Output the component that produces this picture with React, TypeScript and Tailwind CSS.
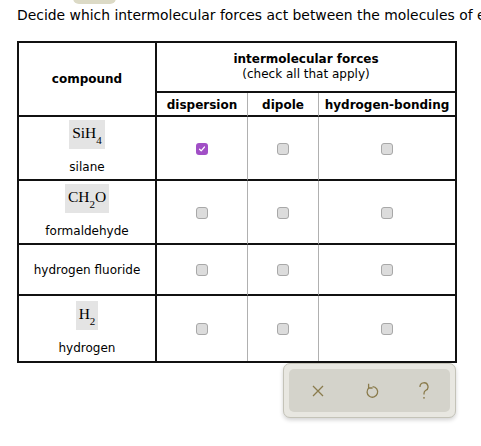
import React from 'react';

type Row = {
  formula?: React.ReactNode;
  name: string;
  checks: [boolean, boolean, boolean];
  h: string;
};

const Sub: React.FC<{ children: React.ReactNode }> = ({ children }) => (
  <sub className="text-[11px] relative top-[6px] align-baseline">{children}</sub>
);

const rows: Row[] = [
  { formula: <>SiH<Sub>4</Sub></>, name: 'silane', checks: [true, false, false], h: 'h-[64px]' },
  { formula: <>CH<Sub>2</Sub>O</>, name: 'formaldehyde', checks: [false, false, false], h: 'h-[64px]' },
  { name: 'hydrogen fluoride', checks: [false, false, false], h: 'h-[51px]' },
  { formula: <>H<Sub>2</Sub></>, name: 'hydrogen', checks: [false, false, false], h: 'h-[65px]' },
];

const Box: React.FC<{ checked: boolean }> = ({ checked }) =>
  checked ? (
    <span className="inline-flex w-[12px] h-[12px] rounded-[3px] bg-[#a14fc6] items-center justify-center">
      <svg width="8" height="8" viewBox="0 0 8 8">
        <path d="M1.5 4.2 L3.2 5.8 L6.5 2" fill="none" stroke="#fff" strokeWidth="1.2" strokeLinecap="round" strokeLinejoin="round" />
      </svg>
    </span>
  ) : (
    <span className="inline-block w-[12px] h-[12px] rounded-[3px] bg-[#dcdcdc] border border-[#a8a8a8]" />
  );

export default function App() {
  return (
    <div className="relative w-[481px] h-[446px] bg-white text-black overflow-hidden" style={{ fontFamily: 'Verdana, "DejaVu Sans", sans-serif' }}>
      <div className="absolute left-[73px] top-[-8px] w-[43px] h-[12px] rounded-b-md bg-[#dcdac6]" />
      <div className="h-[41px] pl-[17px] pt-[7px] text-[13.9px] leading-[17px] whitespace-nowrap overflow-hidden">
        Decide which intermolecular forces act between the molecules of each compound in the table below.
      </div>
      <div className="pl-[17px]">
        <div className="w-[440px] border-2 border-[#111] grid grid-cols-[138px_91px_71px_136px] text-[12px]">
          <div className="row-span-2 border-r-2 border-b-2 border-[#111] flex items-center justify-center font-bold">
            compound
          </div>
          <div className="col-span-3 h-[50px] border-b-2 border-[#111] flex flex-col items-center justify-center pb-[2px]">
            <div className="font-bold leading-[15px]">intermolecular forces</div>
            <div className="leading-[14px]">(check all that apply)</div>
          </div>
          <div className="h-[24px] pt-[1px] border-b-2 border-b-[#111] border-r border-r-[#b0b0b0] flex items-center justify-center font-bold">dispersion</div>
          <div className="h-[24px] pt-[1px] border-b-2 border-b-[#111] border-r border-r-[#b0b0b0] flex items-center justify-center font-bold">dipole</div>
          <div className="h-[24px] pt-[1px] border-b-2 border-b-[#111] flex items-center justify-center font-bold">hydrogen-bonding</div>
          {rows.map((r, ri) => {
            const last = ri === rows.length - 1;
            const bb = last ? '' : 'border-b-2 border-b-[#111]';
            return (
              <React.Fragment key={r.name}>
                <div className={`${r.h} ${bb} border-r-2 border-r-[#111] flex flex-col items-center justify-center`}>
                  {r.formula && (
                    <span
                      className="bg-[#e4e4e4] px-[3px] h-[29px] pt-[2px] mb-[11px] -mt-[2px] text-[15.5px] leading-[22px]"
                      style={{ fontFamily: '"Liberation Serif", "Times New Roman", serif' }}
                    >
                      {r.formula}
                    </span>
                  )}
                  <div className="leading-[14px]">{r.name}</div>
                </div>
                {r.checks.map((c, i) => (
                  <div
                    key={i}
                    className={`${r.h} ${bb} flex items-center justify-center pt-[1px] ${i < 2 ? 'border-r border-r-[#b0b0b0]' : ''}`}
                  >
                    <Box checked={c} />
                  </div>
                ))}
              </React.Fragment>
            );
          })}
        </div>
      </div>
      <div className="flex justify-end pr-[25px]">
        <div className="w-[173px] h-[55px] rounded-[7px] bg-[#e8e7e1] border border-[#c4c3b8] p-[5px] shadow-[0_2px_4px_rgba(0,0,0,0.18)]">
          <div className="h-full rounded-[5px] bg-[#d4d3cb] flex items-center justify-between pl-[22px] pr-[20px]">
            <svg width="14" height="14" viewBox="0 0 14 14">
              <path d="M2 2 L12 12 M12 2 L2 12" stroke="#8a7b4c" strokeWidth="1.3" fill="none" />
            </svg>
            <svg width="16" height="18" viewBox="0 0 16 18">
              <path d="M5 5.8 A5.3 5.3 0 1 0 8.6 4.6" stroke="#8a7b4c" strokeWidth="1.3" fill="none" />
              <path d="M4.6 1.8 L4.6 6 L8.6 6" stroke="#8a7b4c" strokeWidth="1.3" fill="none" strokeLinejoin="round" />
            </svg>
            <svg width="12" height="18" viewBox="0 0 12 18">
              <path d="M2 5 A4 4 0 1 1 7.5 8.5 Q6 9.5 6 11.5 L6 12.5" stroke="#8a7b4c" strokeWidth="1.3" fill="none" />
              <circle cx="6" cy="15.8" r="0.9" fill="#8a7b4c" />
            </svg>
          </div>
        </div>
      </div>
    </div>
  );
}
